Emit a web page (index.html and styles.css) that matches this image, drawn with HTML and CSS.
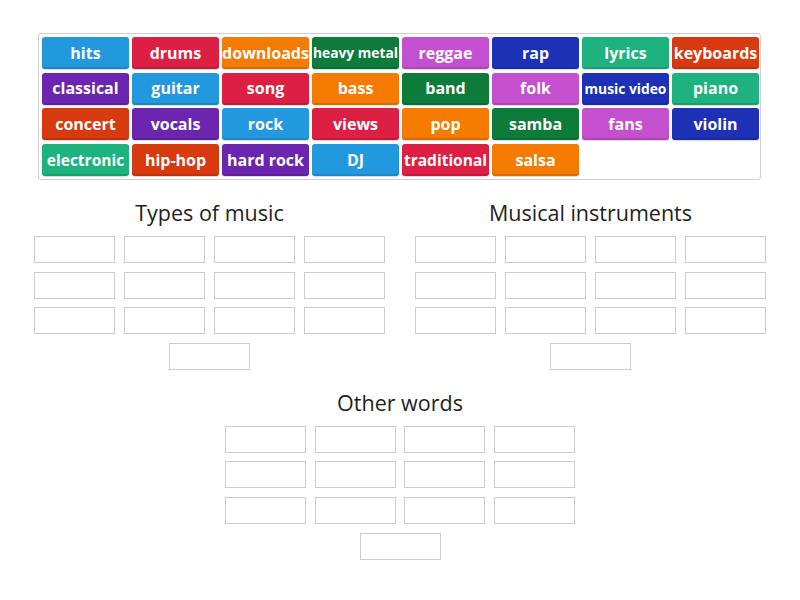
FILE: index.html
```html
<!DOCTYPE html>
<html>
<head>
<meta charset="utf-8">
<link rel="stylesheet" href="styles.css">
</head>
<body>
<div class="page">
  <div class="bank">
    <div class="tile c-blue">hits</div>
    <div class="tile c-red">drums</div>
    <div class="tile c-orange">downloads</div>
    <div class="tile c-green small">heavy metal</div>
    <div class="tile c-magenta">reggae</div>
    <div class="tile c-navy">rap</div>
    <div class="tile c-teal">lyrics</div>
    <div class="tile c-rust">keyboards</div>

    <div class="tile c-purple">classical</div>
    <div class="tile c-blue">guitar</div>
    <div class="tile c-red">song</div>
    <div class="tile c-orange">bass</div>
    <div class="tile c-green">band</div>
    <div class="tile c-magenta">folk</div>
    <div class="tile c-navy small">music video</div>
    <div class="tile c-teal">piano</div>

    <div class="tile c-rust">concert</div>
    <div class="tile c-purple">vocals</div>
    <div class="tile c-blue">rock</div>
    <div class="tile c-red">views</div>
    <div class="tile c-orange">pop</div>
    <div class="tile c-green">samba</div>
    <div class="tile c-magenta">fans</div>
    <div class="tile c-navy">violin</div>

    <div class="tile c-teal mid">electronic</div>
    <div class="tile c-rust">hip-hop</div>
    <div class="tile c-purple">hard rock</div>
    <div class="tile c-blue">DJ</div>
    <div class="tile c-red mid">traditional</div>
    <div class="tile c-orange">salsa</div>
  </div>

  <div class="groups-row">
    <div class="group">
      <div class="heading">Types of music</div>
      <div class="slots">
        <div class="slot"></div><div class="slot"></div><div class="slot"></div><div class="slot"></div>
        <div class="slot"></div><div class="slot"></div><div class="slot"></div><div class="slot"></div>
        <div class="slot"></div><div class="slot"></div><div class="slot"></div><div class="slot"></div>
        <div class="slot"></div>
      </div>
    </div>
    <div class="group">
      <div class="heading">Musical instruments</div>
      <div class="slots">
        <div class="slot"></div><div class="slot"></div><div class="slot"></div><div class="slot"></div>
        <div class="slot"></div><div class="slot"></div><div class="slot"></div><div class="slot"></div>
        <div class="slot"></div><div class="slot"></div><div class="slot"></div><div class="slot"></div>
        <div class="slot"></div>
      </div>
    </div>
  </div>

  <div class="groups-row second">
    <div class="group">
      <div class="heading">Other words</div>
      <div class="slots">
        <div class="slot"></div><div class="slot"></div><div class="slot"></div><div class="slot"></div>
        <div class="slot"></div><div class="slot"></div><div class="slot"></div><div class="slot"></div>
        <div class="slot"></div><div class="slot"></div><div class="slot"></div><div class="slot"></div>
        <div class="slot"></div>
      </div>
    </div>
  </div>
</div>
</body>
</html>
```

FILE: styles.css
```css
html, body {
  margin: 0;
  padding: 0;
  background: #ffffff;
}

body {
  font-family: "Open Sans", "Liberation Sans", sans-serif;
  color: #222222;
}

.page {
  width: 800px;
  padding-top: 33px;
}

.bank {
  box-sizing: border-box;
  margin-left: 38px;
  width: 723px;
  border: 1px solid #cfcfcf;
  border-radius: 3px;
  padding: 3px 2px 3px 3px;
  display: grid;
  grid-template-columns: repeat(8, 87px);
  grid-auto-rows: 32px;
  column-gap: 3px;
  row-gap: 3.7px;
}

.tile {
  border-radius: 3px;
  color: #ffffff;
  font-weight: 700;
  font-size: 16px;
  display: flex;
  align-items: center;
  justify-content: center;
  white-space: nowrap;
  box-shadow: inset 0 -2px 0 rgba(0, 0, 0, 0.12), 0 1px 1px rgba(0, 0, 0, 0.15);
  padding-bottom: 1px;
  box-sizing: border-box;
}

.tile.small {
  font-size: 13.8px;
}

.tile.mid {
  font-size: 15.5px;
}

.c-blue { background: #2299de; }
.c-red { background: #dc1f42; }
.c-orange { background: #f57b00; }
.c-green { background: #0d7c3b; }
.c-magenta { background: #c450cf; }
.c-navy { background: #1c31b6; }
.c-teal { background: #1eb27e; }
.c-rust { background: #d83a10; }
.c-purple { background: #6b25af; }

.groups-row {
  display: flex;
  justify-content: center;
  gap: 31px;
  margin-top: 19px;
}

.groups-row.second {
  margin-top: 19px;
}

.group {
  width: 350px;
  display: flex;
  flex-direction: column;
  align-items: center;
}

.heading {
  font-size: 21.5px;
  line-height: 28px;
  height: 28px;
  font-weight: 400;
  color: #1e1e1e;
  margin-bottom: 9px;
}

.slots {
  display: flex;
  flex-wrap: wrap;
  justify-content: center;
  column-gap: 8.7px;
  row-gap: 8.6px;
  width: 351px;
}

.slot {
  box-sizing: border-box;
  width: 81px;
  height: 27px;
  border: 1px solid #cccccc;
  background: #ffffff;
}
```
